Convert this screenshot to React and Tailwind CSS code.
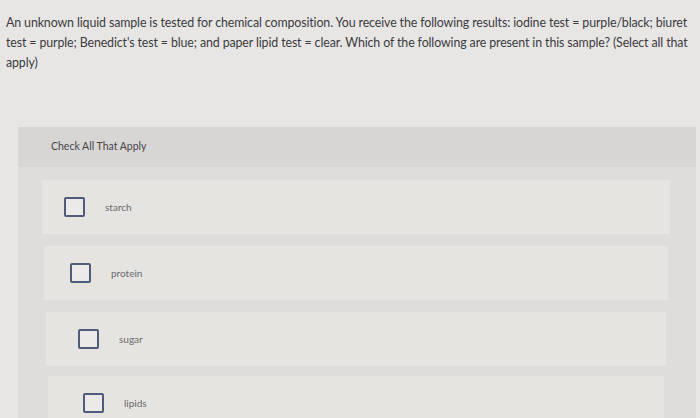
const options = [
  { label: "starch", row: "mt-[13px] ml-[24px] mr-[26px] h-[54px]", box: "pl-[22px]", text: "ml-[20px]" },
  { label: "protein", row: "mt-[12px] ml-[26px] mr-[28px] h-[54px]", box: "pl-[26px]", text: "ml-[20px]" },
  { label: "sugar", row: "mt-[12px] ml-[28px] mr-[30px] h-[54px]", box: "pl-[32px]", text: "ml-[20px]" },
  { label: "lipids", row: "mt-[10px] ml-[30px] mr-[32px] h-[54px]", box: "pl-[35px]", text: "ml-[20px]" },
];

export default function App() {
  return (
    <div
      className="w-[700px] h-[418px] overflow-hidden bg-[#e8e6e5] text-[#3b3b3d]"
      style={{ fontFamily: "Lato, 'Open Sans', sans-serif" }}
    >
      {/* Question */}
      <p className="pl-[6px] pr-[4px] pt-[13px] text-[12.4px] leading-[20px] tracking-[-0.12px]">
        An unknown liquid sample is tested for chemical composition. You receive the following results: iodine test = purple/black; biuret
        test = purple; Benedict's test = blue; and paper lipid test = clear. Which of the following are present in this sample? (Select all that
        apply)
      </p>

      {/* Answer panel */}
      <div className="mt-[54px] ml-[18px] mr-[4px] h-[300px] bg-[#dfdddb]">
        <div className="h-[40px] bg-[#d8d6d5] flex items-center pl-[33px] text-[10.5px] text-[#454547]">
          Check All That Apply
        </div>

        {options.map((o) => (
          <div key={o.label} className={`${o.row} bg-[#e5e4e1] flex items-center ${o.box}`}>
            <span className="w-[21px] h-[20px] border-[2px] border-[#4f5b78] rounded-[2px] bg-[#ebeae8]" />
            <span className={`${o.text} text-[10px] text-[#6a6a6c]`}>{o.label}</span>
          </div>
        ))}
      </div>
    </div>
  );
}
